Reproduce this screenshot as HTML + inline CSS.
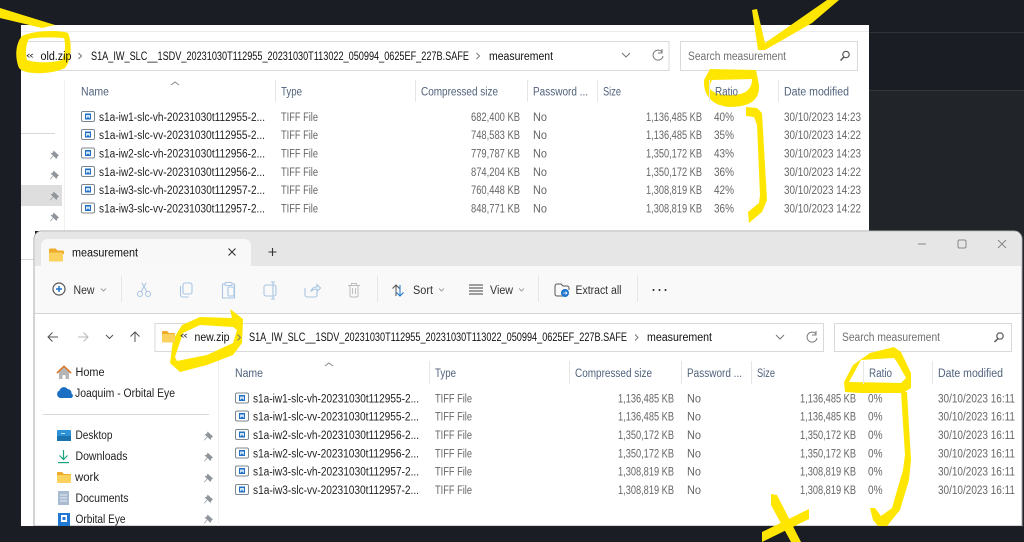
<!DOCTYPE html>
<html><head><meta charset="utf-8"><title>measurement</title>
<style>
html,body{margin:0;padding:0;background:#1a1d23;width:1024px;height:542px;overflow:hidden}
svg{display:block;filter:blur(.3px)}
text{font-family:"Liberation Sans",sans-serif;font-size:11.5px}
.n{fill:#1f1f1f}.g{fill:#666}.h{fill:#50627c}.k{fill:#111}.b{fill:#333}.s{fill:#707070}
.y{fill:#ffe600;fill-rule:evenodd}
</style></head><body>
<svg xmlns="http://www.w3.org/2000/svg" width="1024" height="542" viewBox="0 0 1024 542">
<defs>
<g id="fi"><rect x=".5" y=".5" width="13" height="10" rx="1.5" fill="#fff" stroke="#7c8790"/><rect x="4" y="2.5" width="6" height="6" fill="#1f6fc4"/><path d="M5 7.500V4h4v3.500L7 6z" fill="#cfe3f7"/></g>
<path id="pin" d="M3.500 0.500L9 5.500 7.500 6.500 6.500 9 3.500 6 0.500 9.500 0 9 3 5.500 0.500 3.500 3 2.500z" fill="#8f959b"/>
</defs>

<rect width="1024" height="542" fill="#1a1d23"/>
<rect x="869" y="90" width="155" height="436" fill="#212428"/>
<rect x="869" y="32" width="155" height="1" fill="#2f3236"/>
<rect x="869" y="90" width="155" height="1" fill="#34373b"/>

<!-- old window -->
<rect x="21" y="25" width="848" height="206" fill="#fff"/>
<rect x="21" y="31" width="848" height="1" fill="#ececec"/>
<rect x="15" y="41.500" width="654" height="29" fill="#fff" stroke="#d9d9d9"/>
<rect x="0" y="0" width="21" height="542" fill="#1a1d23"/>
<rect x="680.500" y="41.500" width="177" height="29" fill="#fff" stroke="#d9d9d9"/>
<rect x="64" y="80" width="1" height="151" fill="#f0f0f0"/>
<rect x="21" y="133" width="34" height="1" fill="#d8d8d8"/>
<rect x="21" y="185" width="41" height="21" fill="#dedede"/>

<!-- old marks -->
<path class="y" d="M0 8L55 25 42 28 0 18Z"/>
<path class="y" d="M22 36C35 30 60 30 68 33C72 42 72 60 65 68C50 75 25 75 19 68C15 58 15 44 22 36ZM29 39C26 44 25 52 27 60C35 63 52 63 62 60C65 54 66 45 64 38C50 37 38 37 29 39Z"/>
<path class="y" d="M752 10L757 9 765 43 827 0 839 0 812 23 765 50 758 50Z"/>
<path class="y" d="M710 69L756 70 759 85C760 100 750 107 730 107C712 106 703 95 704 80ZM712 80C710 84 709 88 711 90C716 94 722 95 730 95C745 95 752 90 752 79Z"/>
<path class="y" d="M746 107L757 108 762 113 767 200 762 212 749 223 748 212 759 203 760 195 757 125 754 117 746 116Z"/>

<use href="#pin" x="50" y="150"/><use href="#pin" x="50" y="170"/><use href="#pin" x="50" y="191"/><use href="#pin" x="50" y="212"/>
<text x="26" y="58" class="b" style="font-size:9px" textLength="8" lengthAdjust="spacingAndGlyphs">«</text>
<text x="40.500" y="60" class="k" textLength="31" lengthAdjust="spacingAndGlyphs">old.zip</text>
<path d="M78.500 53l3 3-3 3" fill="none" stroke="#777"/>
<text x="91" y="60" class="k" textLength="378" lengthAdjust="spacingAndGlyphs">S1A_IW_SLC__1SDV_20231030T112955_20231030T113022_050994_0625EF_227B.SAFE</text>
<path d="M476.500 53l3 3-3 3" fill="none" stroke="#777"/>
<text x="489" y="60" class="k" textLength="64" lengthAdjust="spacingAndGlyphs">measurement</text>
<path d="M622 53l4 4 4-4" fill="none" stroke="#777"/>
<path d="M662 52a5 5 0 1 0 1 4M662 49v4h-4" fill="none" stroke="#777"/>
<text x="688" y="60" class="s" textLength="98" lengthAdjust="spacingAndGlyphs">Search measurement</text>
<circle cx="846" cy="54.500" r="3.200" fill="none" stroke="#555" stroke-width="1.200"/><path d="M844 57l-3.500 3.500" stroke="#555" stroke-width="1.500"/>
<path d="M171 85l4-3 4 3" fill="none" stroke="#888"/>
<g fill="#e6e6e6"><rect x="275" y="80" width="1" height="22"/><rect x="415" y="80" width="1" height="22"/><rect x="527" y="80" width="1" height="22"/><rect x="597" y="80" width="1" height="22"/><rect x="709" y="80" width="1" height="22"/><rect x="778" y="80" width="1" height="22"/></g>
<g class="h">
<text x="81" y="95.500" textLength="28" lengthAdjust="spacingAndGlyphs">Name</text>
<text x="281" y="95.500" textLength="21" lengthAdjust="spacingAndGlyphs">Type</text>
<text x="421" y="95.500" textLength="77" lengthAdjust="spacingAndGlyphs">Compressed size</text>
<text x="533" y="95.500" textLength="55" lengthAdjust="spacingAndGlyphs">Password ...</text>
<text x="603" y="95.500" textLength="18" lengthAdjust="spacingAndGlyphs">Size</text>
<text x="715" y="95.500" textLength="23" lengthAdjust="spacingAndGlyphs">Ratio</text>
<text x="784" y="95.500" textLength="65" lengthAdjust="spacingAndGlyphs">Date modified</text>
</g>
<use href="#fi" x="81" y="111"/><use href="#fi" x="81" y="129"/><use href="#fi" x="81" y="147.500"/><use href="#fi" x="81" y="166"/><use href="#fi" x="81" y="184"/><use href="#fi" x="81" y="202.500"/>
<g class="n">
<text x="99" y="121" textLength="166" lengthAdjust="spacingAndGlyphs">s1a-iw1-slc-vh-20231030t112955-2...</text>
<text x="99" y="139" textLength="166" lengthAdjust="spacingAndGlyphs">s1a-iw1-slc-vv-20231030t112955-2...</text>
<text x="99" y="157.500" textLength="166" lengthAdjust="spacingAndGlyphs">s1a-iw2-slc-vh-20231030t112956-2...</text>
<text x="99" y="176" textLength="166" lengthAdjust="spacingAndGlyphs">s1a-iw2-slc-vv-20231030t112956-2...</text>
<text x="99" y="194" textLength="166" lengthAdjust="spacingAndGlyphs">s1a-iw3-slc-vh-20231030t112957-2...</text>
<text x="99" y="212.500" textLength="166" lengthAdjust="spacingAndGlyphs">s1a-iw3-slc-vv-20231030t112957-2...</text>
</g>
<g class="g">
<text x="281" y="121" textLength="37" lengthAdjust="spacingAndGlyphs">TIFF File</text>
<text x="281" y="139" textLength="37" lengthAdjust="spacingAndGlyphs">TIFF File</text>
<text x="281" y="157.500" textLength="37" lengthAdjust="spacingAndGlyphs">TIFF File</text>
<text x="281" y="176" textLength="37" lengthAdjust="spacingAndGlyphs">TIFF File</text>
<text x="281" y="194" textLength="37" lengthAdjust="spacingAndGlyphs">TIFF File</text>
<text x="281" y="212.500" textLength="37" lengthAdjust="spacingAndGlyphs">TIFF File</text>
<text x="471" y="121" textLength="49" lengthAdjust="spacingAndGlyphs">682,400 KB</text>
<text x="471" y="139" textLength="49" lengthAdjust="spacingAndGlyphs">748,583 KB</text>
<text x="471" y="157.500" textLength="49" lengthAdjust="spacingAndGlyphs">779,787 KB</text>
<text x="471" y="176" textLength="49" lengthAdjust="spacingAndGlyphs">874,204 KB</text>
<text x="471" y="194" textLength="49" lengthAdjust="spacingAndGlyphs">760,448 KB</text>
<text x="471" y="212.500" textLength="49" lengthAdjust="spacingAndGlyphs">848,771 KB</text>
<text x="533" y="121" textLength="14" lengthAdjust="spacingAndGlyphs">No</text>
<text x="533" y="139" textLength="14" lengthAdjust="spacingAndGlyphs">No</text>
<text x="533" y="157.500" textLength="14" lengthAdjust="spacingAndGlyphs">No</text>
<text x="533" y="176" textLength="14" lengthAdjust="spacingAndGlyphs">No</text>
<text x="533" y="194" textLength="14" lengthAdjust="spacingAndGlyphs">No</text>
<text x="533" y="212.500" textLength="14" lengthAdjust="spacingAndGlyphs">No</text>
<text x="646" y="121" textLength="56" lengthAdjust="spacingAndGlyphs">1,136,485 KB</text>
<text x="646" y="139" textLength="56" lengthAdjust="spacingAndGlyphs">1,136,485 KB</text>
<text x="646" y="157.500" textLength="56" lengthAdjust="spacingAndGlyphs">1,350,172 KB</text>
<text x="646" y="176" textLength="56" lengthAdjust="spacingAndGlyphs">1,350,172 KB</text>
<text x="646" y="194" textLength="56" lengthAdjust="spacingAndGlyphs">1,308,819 KB</text>
<text x="646" y="212.500" textLength="56" lengthAdjust="spacingAndGlyphs">1,308,819 KB</text>
<text x="714" y="121" textLength="20" lengthAdjust="spacingAndGlyphs">40%</text>
<text x="714" y="139" textLength="20" lengthAdjust="spacingAndGlyphs">35%</text>
<text x="714" y="157.500" textLength="20" lengthAdjust="spacingAndGlyphs">43%</text>
<text x="714" y="176" textLength="20" lengthAdjust="spacingAndGlyphs">36%</text>
<text x="714" y="194" textLength="20" lengthAdjust="spacingAndGlyphs">42%</text>
<text x="714" y="212.500" textLength="20" lengthAdjust="spacingAndGlyphs">36%</text>
<text x="784" y="121" textLength="77" lengthAdjust="spacingAndGlyphs">30/10/2023 14:23</text>
<text x="784" y="139" textLength="77" lengthAdjust="spacingAndGlyphs">30/10/2023 14:22</text>
<text x="784" y="157.500" textLength="77" lengthAdjust="spacingAndGlyphs">30/10/2023 14:23</text>
<text x="784" y="176" textLength="77" lengthAdjust="spacingAndGlyphs">30/10/2023 14:22</text>
<text x="784" y="194" textLength="77" lengthAdjust="spacingAndGlyphs">30/10/2023 14:23</text>
<text x="784" y="212.500" textLength="77" lengthAdjust="spacingAndGlyphs">30/10/2023 14:22</text>
</g>

<!-- behind strip -->
<rect x="21" y="231" width="14" height="295" fill="#fff"/>
<rect x="21" y="259" width="13" height="1" fill="#d8d8d8"/>

<!-- new window -->
<path d="M34 526V239a8 8 0 0 1 8-8H1014a8 8 0 0 1 8 8V526z" fill="#fff" stroke="#a8a8a8"/>
<path d="M35 266V239a7 7 0 0 1 7-7H1014a7 7 0 0 1 7 7V266z" fill="#e6e6e6"/>
<path d="M41 266V246a7 7 0 0 1 7-7H244a7 7 0 0 1 7 7V266z" fill="#f8f8f8"/>
<rect x="35" y="266" width="986" height="47" fill="#f9f9f9"/>
<rect x="35" y="313" width="986" height="1" fill="#d4d4d4"/>
<rect x="155" y="323.500" width="668.500" height="28" fill="#fff" stroke="#d9d9d9"/>
<rect x="834.500" y="323.500" width="177" height="28" fill="#fff" stroke="#d9d9d9"/>
<rect x="218" y="352" width="1" height="174" fill="#f0f0f0"/>
<rect x="21" y="526" width="1001" height="1" fill="#222"/>

<!-- new marks -->
<path class="y" d="M230 309L243 319 242 343 233 355 207 365 180 372 170 363 173 340 182 325 200 317 232 318ZM233 327L200 325 183 333 175 357 177 361 207 355 233 343 237 330Z"/>
<path class="y" d="M894 347L901 352 911 373 911 388 903 393 860 393 845 392 844 382 853 365 870 353ZM894 358L861 360 849 382 901 383 906 378 897 362Z"/>
<path class="y" d="M901 392L907 392 911 460 909 480 900 510 887 526 878 526 873 520 870 508 875 508 881 516 892 508 903 470 905 455Z"/>
<path class="y" d="M771 494L777 495 801 542 791 542 771 505Z"/>
<path class="y" d="M809 509L809 519 762 542 762 532Z"/>

<!-- tab -->
<path d="M49 250a1.500 1.500 0 0 1 1.500-1.500h5l2 2h5a1.500 1.500 0 0 1 1.500 1.500v2H49z" fill="#eeab2a"/>
<rect x="49" y="252.500" width="14" height="9" rx="1" fill="#fbd25e"/>
<text x="72" y="256.500" class="k" textLength="66" lengthAdjust="spacingAndGlyphs">measurement</text>
<path d="M228.500 248.500l7 7m0-7l-7 7" stroke="#333" stroke-width="1.100" fill="none"/>
<path d="M272.500 248v8M268.500 252h8" stroke="#333" stroke-width="1.100" fill="none"/>
<path d="M918 244h8" stroke="#888" stroke-width="1"/>
<rect x="958" y="240" width="8" height="8" rx="1.500" fill="none" stroke="#888"/>
<path d="M998 240l8 8m0-8l-8 8" stroke="#888" fill="none"/>
<!-- toolbar -->
<circle cx="59" cy="289" r="6" fill="#fff" stroke="#555" stroke-width="1.200"/><path d="M59 286v6M56 289h6" stroke="#1a73cc" stroke-width="1.500"/>
<text x="73.500" y="294" class="b" textLength="21" lengthAdjust="spacingAndGlyphs">New</text>
<path d="M101 288.500l2.500 2.500 2.500-2.500" fill="none" stroke="#888" stroke-width=".8"/>
<rect x="121" y="276" width="1" height="26" fill="#e6e6e6"/>
<g fill="none" stroke="#a9c6e2" stroke-width="1.100">
<circle cx="140" cy="294" r="2.500"/><circle cx="148" cy="294" r="2.500"/><path d="M141 292l5-9M147 292l-5-9"/>
<rect x="183" y="283" width="9" height="11" rx="2"/><path d="M180.500 286v9a2 2 0 0 0 2 2h6"/>
<path d="M225 284h-2.500v14h12v-14H232"/><rect x="225" y="282.500" width="7" height="3" rx="1"/><rect x="228" y="287" width="6" height="9" rx="1" fill="#f9f9f9"/>
<rect x="264" y="285" width="12" height="11" rx="2"/><path d="M273 282v17M271 282h4M271 299h4"/>
<path d="M305 288v7a2 2 0 0 0 2 2h8a2 2 0 0 0 2-2v-3"/><path d="M311 291c1-3 3-4 6-4v-2.500l3.500 3.500-3.500 3.500V289c-2 0-4 .500-6 2z"/>
</g>
<g fill="none" stroke="#bdbdbd" stroke-width="1"><path d="M348 285.500h12M350 285.500v10a1.500 1.500 0 0 0 1.500 1.500h5a1.500 1.500 0 0 0 1.500-1.500v-10M351.500 285v-1.500h5v1.500M352.500 288v6M355.500 288v6"/></g>
<rect x="377" y="276" width="1" height="26" fill="#e6e6e6"/>
<path d="M396 296v-11M392.500 288.500L396 285l3.500 3.500" fill="none" stroke="#555" stroke-width="1"/>
<path d="M400 285v11M396.500 292.500L400 296l3.500-3.500" fill="none" stroke="#1a73cc" stroke-width="1"/>
<text x="413" y="294" class="b" textLength="20" lengthAdjust="spacingAndGlyphs">Sort</text>
<path d="M439 288.500l2.500 2.500 2.500-2.500" fill="none" stroke="#888" stroke-width=".8"/>
<path d="M469 285h14M469 288h14M469 291h14M469 294h14" stroke="#444" stroke-width=".9"/>
<text x="490" y="294" class="b" textLength="23" lengthAdjust="spacingAndGlyphs">View</text>
<path d="M519 288.500l2.500 2.500 2.500-2.500" fill="none" stroke="#888" stroke-width=".8"/>
<rect x="538" y="276" width="1" height="26" fill="#e6e6e6"/>
<path d="M563 296h-6a2 2 0 0 1-2-2v-8a2 2 0 0 1 2-2h4l2 2h4a2 2 0 0 1 2 2v2" fill="none" stroke="#555" stroke-width="1"/>
<circle cx="565" cy="293" r="4" fill="#1a73cc"/><path d="M563 293h4M565.500 291.500l1.500 1.500-1.500 1.500" fill="none" stroke="#fff" stroke-width=".8"/>
<text x="575.500" y="294" class="b" textLength="46" lengthAdjust="spacingAndGlyphs">Extract all</text>
<rect x="637" y="276" width="1" height="26" fill="#e6e6e6"/>
<circle cx="653.500" cy="290" r="1" fill="#222"/><circle cx="659.500" cy="290" r="1" fill="#222"/><circle cx="665.500" cy="290" r="1" fill="#222"/>
<!-- nav -->
<path d="M58 337H48M52.500 332.500L48 337l4.500 4.500" fill="none" stroke="#555" stroke-width="1"/>
<path d="M78 337h10M83.500 332.500L88 337l-4.500 4.500" fill="none" stroke="#b8b8b8" stroke-width="1"/>
<path d="M106 335l3.500 3.500 3.500-3.500" fill="none" stroke="#555" stroke-width="1"/>
<path d="M135 342v-10M130.500 336.500L135 332l4.500 4.500" fill="none" stroke="#555" stroke-width="1"/>
<path d="M162 332a1 1 0 0 1 1-1h4l2 2h5a1 1 0 0 1 1 1v1h-13z" fill="#eeab2a"/><rect x="162" y="334" width="13" height="8.500" rx="1" fill="#fbd25e"/>
<text x="180" y="338" class="b" style="font-size:9px" textLength="8" lengthAdjust="spacingAndGlyphs">«</text>
<text x="194.500" y="341" class="k" textLength="35" lengthAdjust="spacingAndGlyphs">new.zip</text>
<path d="M237.500 334.500l3 3-3 3" fill="none" stroke="#777"/>
<text x="249" y="341" class="k" textLength="378" lengthAdjust="spacingAndGlyphs">S1A_IW_SLC__1SDV_20231030T112955_20231030T113022_050994_0625EF_227B.SAFE</text>
<path d="M635 334.500l3 3-3 3" fill="none" stroke="#777"/>
<text x="647" y="341" class="k" textLength="65" lengthAdjust="spacingAndGlyphs">measurement</text>
<path d="M776 335l4 4 4-4" fill="none" stroke="#777"/>
<path d="M816 334a5 5 0 1 0 1 4M816 331v4h-4" fill="none" stroke="#777"/>
<text x="842" y="341" class="s" textLength="98" lengthAdjust="spacingAndGlyphs">Search measurement</text>
<circle cx="1000" cy="336" r="3.200" fill="none" stroke="#555" stroke-width="1.200"/><path d="M998 338.500l-3.500 3.500" stroke="#555" stroke-width="1.500"/>
<!-- sidebar -->
<path d="M57 373l7-6.500 7 6.500" fill="none" stroke="#d9782d" stroke-width="1.800"/><path d="M59 372l5-4.500 5 4.500v7h-3.500v-4h-3v4H59z" fill="#b5b5b5"/>
<text x="75.500" y="376" class="n" textLength="29" lengthAdjust="spacingAndGlyphs">Home</text>
<path d="M60 398a4 4 0 0 1-.500-7.500 4.500 4.500 0 0 1 8-1.500 4 4 0 0 1 4 4.500 2.500 2.500 0 0 1 0 4.500z" fill="#1b6fc2"/>
<text x="75" y="397" class="n" textLength="100" lengthAdjust="spacingAndGlyphs">Joaquim - Orbital Eye</text>
<rect x="43" y="414" width="166" height="1" fill="#d8d8d8"/>
<rect x="57" y="430" width="14" height="11" rx="1" fill="#2d93d6"/><rect x="57" y="436" width="14" height="5" fill="#1a73ad"/><rect x="61" y="433" width="4" height="1" fill="#bfe3f7"/>
<text x="75.500" y="439" class="n" textLength="37" lengthAdjust="spacingAndGlyphs">Desktop</text>
<path d="M63.500 450v9M59.500 455.500l4 4 4-4" fill="none" stroke="#1ba37f" stroke-width="1.200"/><rect x="58" y="462" width="11" height="1.200" fill="#1ba37f"/>
<text x="75.500" y="460" class="n" textLength="52" lengthAdjust="spacingAndGlyphs">Downloads</text>
<path d="M57 473a1 1 0 0 1 1-1h4l2 2h6a1 1 0 0 1 1 1v1H57z" fill="#eeab2a"/><rect x="57" y="475" width="14" height="8" rx="1" fill="#fbd25e"/>
<text x="75" y="481" class="n" textLength="24" lengthAdjust="spacingAndGlyphs">work</text>
<rect x="58" y="491" width="11" height="14" fill="#a8bbd2"/><path d="M60 495h7M60 498h7M60 501h7" stroke="#fff" stroke-width=".8"/>
<text x="75.500" y="502" class="n" textLength="53" lengthAdjust="spacingAndGlyphs">Documents</text>
<rect x="58" y="513" width="12" height="13" fill="#1f78d1"/><rect x="61" y="515" width="6" height="7" fill="#fff"/><rect x="62.500" y="517" width="3" height="3" fill="#1f78d1"/>
<text x="75.500" y="523" class="n" textLength="50" lengthAdjust="spacingAndGlyphs">Orbital Eye</text>
<use href="#pin" x="204" y="431"/><use href="#pin" x="204" y="452"/><use href="#pin" x="204" y="473"/><use href="#pin" x="204" y="494"/><use href="#pin" x="204" y="514"/>
<!-- list -->
<path d="M325 366l4-3 4 3" fill="none" stroke="#888"/>
<g fill="#e6e6e6"><rect x="429" y="361" width="1" height="23"/><rect x="569" y="361" width="1" height="23"/><rect x="681" y="361" width="1" height="23"/><rect x="751" y="361" width="1" height="23"/><rect x="863" y="361" width="1" height="23"/><rect x="932" y="361" width="1" height="23"/></g>
<g class="h">
<text x="235" y="377" textLength="28" lengthAdjust="spacingAndGlyphs">Name</text>
<text x="435" y="377" textLength="21" lengthAdjust="spacingAndGlyphs">Type</text>
<text x="575" y="377" textLength="77" lengthAdjust="spacingAndGlyphs">Compressed size</text>
<text x="687" y="377" textLength="55" lengthAdjust="spacingAndGlyphs">Password ...</text>
<text x="757" y="377" textLength="18" lengthAdjust="spacingAndGlyphs">Size</text>
<text x="869" y="377" textLength="23" lengthAdjust="spacingAndGlyphs">Ratio</text>
<text x="938" y="377" textLength="65" lengthAdjust="spacingAndGlyphs">Date modified</text>
</g>
<use href="#fi" x="235" y="392.500"/><use href="#fi" x="235" y="410.500"/><use href="#fi" x="235" y="429"/><use href="#fi" x="235" y="447.500"/><use href="#fi" x="235" y="465.500"/><use href="#fi" x="235" y="484"/>
<g class="n">
<text x="253" y="402.500" textLength="166" lengthAdjust="spacingAndGlyphs">s1a-iw1-slc-vh-20231030t112955-2...</text>
<text x="253" y="420.500" textLength="166" lengthAdjust="spacingAndGlyphs">s1a-iw1-slc-vv-20231030t112955-2...</text>
<text x="253" y="439" textLength="166" lengthAdjust="spacingAndGlyphs">s1a-iw2-slc-vh-20231030t112956-2...</text>
<text x="253" y="457.500" textLength="166" lengthAdjust="spacingAndGlyphs">s1a-iw2-slc-vv-20231030t112956-2...</text>
<text x="253" y="475.500" textLength="166" lengthAdjust="spacingAndGlyphs">s1a-iw3-slc-vh-20231030t112957-2...</text>
<text x="253" y="494" textLength="166" lengthAdjust="spacingAndGlyphs">s1a-iw3-slc-vv-20231030t112957-2...</text>
</g>
<g class="g">
<text x="435" y="402.500" textLength="37" lengthAdjust="spacingAndGlyphs">TIFF File</text>
<text x="435" y="420.500" textLength="37" lengthAdjust="spacingAndGlyphs">TIFF File</text>
<text x="435" y="439" textLength="37" lengthAdjust="spacingAndGlyphs">TIFF File</text>
<text x="435" y="457.500" textLength="37" lengthAdjust="spacingAndGlyphs">TIFF File</text>
<text x="435" y="475.500" textLength="37" lengthAdjust="spacingAndGlyphs">TIFF File</text>
<text x="435" y="494" textLength="37" lengthAdjust="spacingAndGlyphs">TIFF File</text>
<text x="618" y="402.500" textLength="56" lengthAdjust="spacingAndGlyphs">1,136,485 KB</text>
<text x="618" y="420.500" textLength="56" lengthAdjust="spacingAndGlyphs">1,136,485 KB</text>
<text x="618" y="439" textLength="56" lengthAdjust="spacingAndGlyphs">1,350,172 KB</text>
<text x="618" y="457.500" textLength="56" lengthAdjust="spacingAndGlyphs">1,350,172 KB</text>
<text x="618" y="475.500" textLength="56" lengthAdjust="spacingAndGlyphs">1,308,819 KB</text>
<text x="618" y="494" textLength="56" lengthAdjust="spacingAndGlyphs">1,308,819 KB</text>
<text x="687" y="402.500" textLength="14" lengthAdjust="spacingAndGlyphs">No</text>
<text x="687" y="420.500" textLength="14" lengthAdjust="spacingAndGlyphs">No</text>
<text x="687" y="439" textLength="14" lengthAdjust="spacingAndGlyphs">No</text>
<text x="687" y="457.500" textLength="14" lengthAdjust="spacingAndGlyphs">No</text>
<text x="687" y="475.500" textLength="14" lengthAdjust="spacingAndGlyphs">No</text>
<text x="687" y="494" textLength="14" lengthAdjust="spacingAndGlyphs">No</text>
<text x="800" y="402.500" textLength="56" lengthAdjust="spacingAndGlyphs">1,136,485 KB</text>
<text x="800" y="420.500" textLength="56" lengthAdjust="spacingAndGlyphs">1,136,485 KB</text>
<text x="800" y="439" textLength="56" lengthAdjust="spacingAndGlyphs">1,350,172 KB</text>
<text x="800" y="457.500" textLength="56" lengthAdjust="spacingAndGlyphs">1,350,172 KB</text>
<text x="800" y="475.500" textLength="56" lengthAdjust="spacingAndGlyphs">1,308,819 KB</text>
<text x="800" y="494" textLength="56" lengthAdjust="spacingAndGlyphs">1,308,819 KB</text>
<text x="868" y="402.500" textLength="14.500" lengthAdjust="spacingAndGlyphs">0%</text>
<text x="868" y="420.500" textLength="14.500" lengthAdjust="spacingAndGlyphs">0%</text>
<text x="868" y="439" textLength="14.500" lengthAdjust="spacingAndGlyphs">0%</text>
<text x="868" y="457.500" textLength="14.500" lengthAdjust="spacingAndGlyphs">0%</text>
<text x="868" y="475.500" textLength="14.500" lengthAdjust="spacingAndGlyphs">0%</text>
<text x="868" y="494" textLength="14.500" lengthAdjust="spacingAndGlyphs">0%</text>
<text x="938" y="402.500" textLength="77" lengthAdjust="spacingAndGlyphs">30/10/2023 16:11</text>
<text x="938" y="420.500" textLength="77" lengthAdjust="spacingAndGlyphs">30/10/2023 16:11</text>
<text x="938" y="439" textLength="77" lengthAdjust="spacingAndGlyphs">30/10/2023 16:11</text>
<text x="938" y="457.500" textLength="77" lengthAdjust="spacingAndGlyphs">30/10/2023 16:11</text>
<text x="938" y="475.500" textLength="77" lengthAdjust="spacingAndGlyphs">30/10/2023 16:11</text>
<text x="938" y="494" textLength="77" lengthAdjust="spacingAndGlyphs">30/10/2023 16:11</text>
</g>
</svg>
</body></html>
